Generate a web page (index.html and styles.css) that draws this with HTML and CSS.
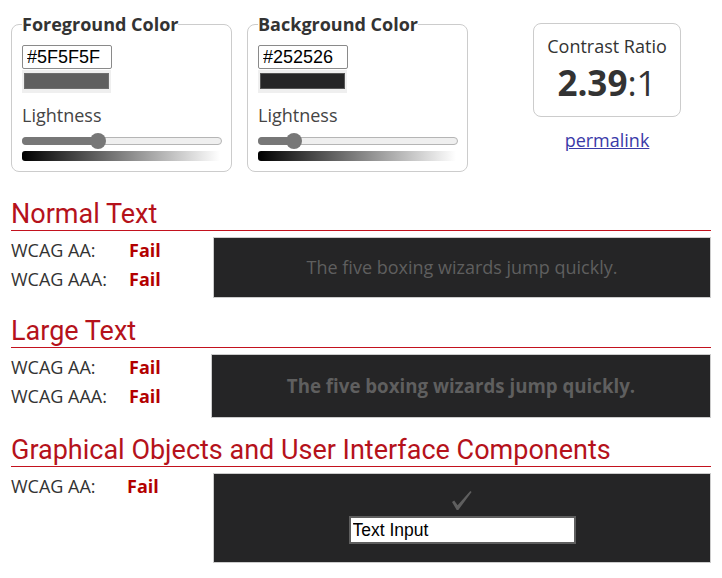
FILE: index.html
```html
<!DOCTYPE html>
<html lang="en">
<head>
<meta charset="utf-8">
<title>Contrast Checker</title>
<link rel="stylesheet" href="styles.css">
</head>
<body>
<div class="page">
  <div class="top">
    <fieldset class="picker">
      <legend>Foreground Color</legend>
      <input class="hex" type="text" value="#5F5F5F">
      <div class="swatch"><div class="swatch-fill fg"></div></div>
      <div class="label">Lightness</div>
      <div class="slider">
        <div class="track"></div>
        <div class="fill" style="width: 76px"></div>
        <div class="thumb" style="left: 68px"></div>
      </div>
      <div class="gradient"></div>
    </fieldset>
    <fieldset class="picker">
      <legend>Background Color</legend>
      <input class="hex" type="text" value="#252526">
      <div class="swatch"><div class="swatch-fill bg"></div></div>
      <div class="label">Lightness</div>
      <div class="slider">
        <div class="track"></div>
        <div class="fill" style="width: 36px"></div>
        <div class="thumb" style="left: 28px"></div>
      </div>
      <div class="gradient"></div>
    </fieldset>
    <div class="ratio-col">
      <div class="ratio-box">
        <div class="ratio-label">Contrast Ratio</div>
        <div class="ratio-value"><b>2.39</b>:1</div>
      </div>
      <a class="permalink" href="#">permalink</a>
    </div>
  </div>

  <section class="section s-normal">
    <h2>Normal Text</h2>
    <div class="row">
      <div class="criteria">
        <div class="crit"><span class="name">WCAG AA:</span><span class="fail">Fail</span></div>
        <div class="crit"><span class="name">WCAG AAA:</span><span class="fail">Fail</span></div>
      </div>
      <div class="preview p-normal">The five boxing wizards jump quickly.</div>
    </div>
  </section>

  <section class="section s-large">
    <h2>Large Text</h2>
    <div class="row">
      <div class="criteria c-large">
        <div class="crit"><span class="name">WCAG AA:</span><span class="fail">Fail</span></div>
        <div class="crit"><span class="name">WCAG AAA:</span><span class="fail">Fail</span></div>
      </div>
      <div class="preview p-large">The five boxing wizards jump quickly.</div>
    </div>
  </section>

  <section class="section s-graph">
    <h2>Graphical Objects and User Interface Components</h2>
    <div class="row">
      <div class="criteria c-graph">
        <div class="crit"><span class="name name-short">WCAG AA:</span><span class="fail">Fail</span></div>
      </div>
      <div class="preview p-graph">
        <svg class="check" width="20" height="19" viewBox="0 0 20 19" aria-label="check mark">
          <polygon points="0,11 2.2,9.6 5.6,14.2 18.3,0 19.6,0.9 6.3,19 4.7,19"/>
        </svg>
        <input class="demo-input" type="text" value="Text Input">
      </div>
    </div>
  </section>
</div>
</body>
</html>
```

FILE: styles.css
```css
html, body {
  margin: 0;
  padding: 0;
  background: #ffffff;
}

body {
  font-family: "Open Sans", "Liberation Sans", sans-serif;
  font-size: 18px;
  color: #333333;
}

.page {
  padding: 12px 11px 0 11px;
}

/* ---------- top area ---------- */
.top {
  display: flex;
  align-items: flex-start;
}

.picker {
  box-sizing: border-box;
  width: 221px;
  min-width: 0;
  margin: 0 15px 0 0;
  padding: 9px 9px 10px 10px;
  border: 1px solid #cccccc;
  border-radius: 8px;
}

.picker legend {
  padding: 0;
  font-size: 18px;
  line-height: 24px;
  font-weight: 700;
  color: #333333;
}

.hex {
  display: block;
  box-sizing: border-box;
  width: 90px;
  height: 24px;
  margin: 0;
  padding: 0 4px;
  border: 1px solid #8a8a8a;
  border-radius: 2px;
  font-family: "Liberation Sans", Arial, sans-serif;
  font-size: 18px;
  color: #000000;
  background: #ffffff;
}

.swatch {
  box-sizing: border-box;
  width: 89px;
  height: 23px;
  margin-top: 1px;
  padding: 3px 2px 4px 2px;
  background: #efefef;
}

.swatch-fill {
  box-sizing: border-box;
  height: 16px;
  border: 1px solid #6e6e6e;
}

.swatch-fill.fg { background: #5f5f5f; }
.swatch-fill.bg { background: #252526; border-color: #555555; }

.label {
  margin-top: 10px;
  line-height: 24px;
  color: #444444;
}

.slider {
  position: relative;
  height: 16px;
  margin-top: 6px;
}

.slider .track {
  position: absolute;
  left: 0;
  right: 0;
  top: 4px;
  height: 8px;
  box-sizing: border-box;
  border: 1px solid #b5b5b5;
  border-radius: 4px;
  background: #efefef;
}

.slider .fill {
  position: absolute;
  left: 0;
  top: 4px;
  height: 8px;
  border-radius: 4px 0 0 4px;
  background: #777777;
}

.slider .thumb {
  position: absolute;
  top: 0;
  width: 16px;
  height: 16px;
  border-radius: 50%;
  background: #777777;
}

.gradient {
  width: 198px;
  height: 10px;
  margin-top: 2px;
  border-radius: 3px 0 0 3px;
  background: linear-gradient(to right, #000000, #ffffff);
}

.ratio-col {
  margin-left: 50px;
  margin-top: 11px;
  display: flex;
  flex-direction: column;
  align-items: center;
}

.ratio-box {
  box-sizing: border-box;
  width: 148px;
  height: 94px;
  padding-top: 10px;
  border: 1px solid #cccccc;
  border-radius: 8px;
  text-align: center;
}

.ratio-label {
  line-height: 24px;
  color: #333333;
}

.ratio-value {
  margin-top: 5px;
  font-size: 35px;
  line-height: 40px;
  color: #333333;
}

.ratio-value b { font-weight: 700; }

.permalink {
  margin-top: 11px;
  line-height: 24px;
  color: #3a3aa8;
  text-decoration: underline;
}

/* ---------- result sections ---------- */
.section h2 {
  margin: 0;
  padding: 0 0 1px 0;
  border-bottom: 1px solid #c3121e;
  font-family: Roboto, "Liberation Sans", sans-serif;
  font-weight: 400;
  font-size: 27px;
  line-height: 30px;
  color: #b5121b;
}

.s-normal { margin-top: 27px; }
.s-large { margin-top: 18px; }
.s-graph { margin-top: 17px; }

.row {
  display: flex;
  align-items: flex-start;
  margin-top: 5px;
}

.criteria {
  width: 202px;
  flex: none;
}

.c-large { width: 200px; }

.crit {
  display: flex;
  line-height: 29px;
}

.crit .name {
  width: 118px;
  color: #333333;
}

.crit .name-short { width: 116px; }

.fail {
  font-weight: 700;
  color: #b30000;
}

.preview {
  flex: 1;
  box-sizing: border-box;
  margin-top: 1px;
  border: 1px solid #cccccc;
  background: #252526;
  color: #5f5f5f;
  text-align: center;
}

.p-normal {
  height: 61px;
  line-height: 59px;
  font-size: 18px;
}

.p-large {
  height: 64px;
  line-height: 62px;
  font-size: 18.7px;
  font-weight: 700;
}

.p-graph {
  height: 90px;
  display: flex;
  flex-direction: column;
  align-items: center;
  padding-top: 17px;
}

.check {
  display: block;
  fill: #5f5f5f;
}

.demo-input {
  box-sizing: border-box;
  width: 227px;
  height: 28px;
  margin: 6px 0 0 0;
  padding: 0 2px;
  border: 2px solid #5f5f5f;
  background: #ffffff;
  font-family: "Liberation Sans", Arial, sans-serif;
  font-size: 17.5px;
  color: #000000;
}
```
